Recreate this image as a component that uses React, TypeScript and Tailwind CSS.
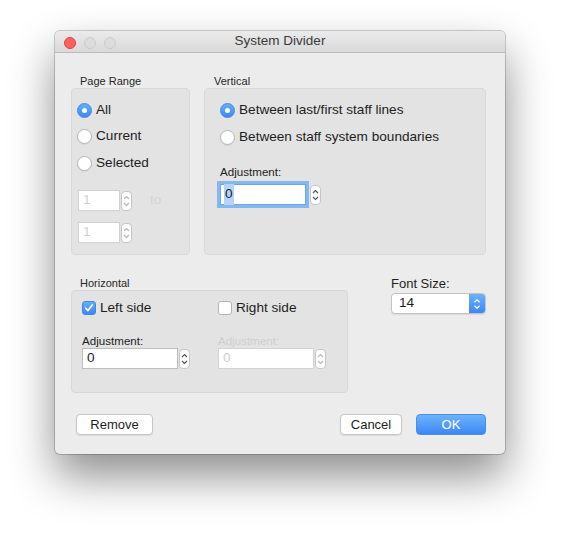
import React from "react";

const font = { fontFamily: '"Liberation Sans", Arial, sans-serif' };

function Radio({ checked, label, extra = "" }: { checked?: boolean; label: string; extra?: string }) {
  return (
    <div className={`flex h-[26px] items-center gap-[4px] ${extra}`}>
      {checked ? (
        <span className="flex h-[15px] w-[15px] items-center justify-center rounded-full border border-[#3d86ef] bg-gradient-to-b from-[#68aef9] to-[#3a88f5]">
          <span className="h-[5px] w-[5px] rounded-full bg-white" />
        </span>
      ) : (
        <span className="h-[15px] w-[15px] rounded-full border border-[#b4b4b4] bg-white shadow-[0_1px_0_rgba(0,0,0,0.05)]" />
      )}
      <span className="text-[13.6px] text-[#1e1e1e]">{label}</span>
    </div>
  );
}

function Check({ checked, label }: { checked?: boolean; label: string }) {
  return (
    <div className="flex h-[20px] items-center gap-[4px]">
      {checked ? (
        <span className="flex h-[14px] w-[14px] items-center justify-center rounded-[3px] border border-[#3d86ef] bg-gradient-to-b from-[#68aef9] to-[#3a88f5]">
          <svg width="10" height="10" viewBox="0 0 10 10">
            <path d="M1.8 5.2 L4 7.6 L8.4 1.8" fill="none" stroke="white" strokeWidth="1.6" strokeLinecap="round" strokeLinejoin="round" />
          </svg>
        </span>
      ) : (
        <span className="h-[14px] w-[14px] rounded-[3px] border border-[#b4b4b4] bg-white" />
      )}
      <span className="text-[13.6px] text-[#1e1e1e]">{label}</span>
    </div>
  );
}

function Stepper({ disabled }: { disabled?: boolean }) {
  const c = disabled ? "#b8b8b8" : "#555";
  return (
    <span className="flex h-[20px] w-[11px] items-center justify-center rounded-[4px] border border-[#c6c6c6] bg-white">
      <svg width="7" height="14" viewBox="0 0 7 14">
        <path d="M1 5 L3.5 2.5 L6 5" fill="none" stroke={c} strokeWidth="1.1" />
        <path d="M1 9 L3.5 11.5 L6 9" fill="none" stroke={c} strokeWidth="1.1" />
      </svg>
    </span>
  );
}

function Spin({ value, width, disabled }: { value: string; width: string; disabled?: boolean }) {
  return (
    <div className="flex items-center gap-[1px]">
      <div className={`flex h-[21px] items-center border px-[4px] text-[13.6px] ${disabled ? "border-[#d3d3d3] bg-white text-[#cfcfcf]" : "border-[#bdbdbd] bg-white text-[#1e1e1e]"} ${width}`}>
        {value}
      </div>
      <Stepper disabled={disabled} />
    </div>
  );
}

function GroupLabel({ text, pl }: { text: string; pl: string }) {
  return <div className={`h-[14px] text-[11px] leading-[14px] text-[#262626] ${pl}`}>{text}</div>;
}

export default function App() {
  return (
    <div className="h-[535px] w-[562px] bg-white pl-[55px] pt-[31px]" style={font}>
      <div className="flex h-[423px] w-[450px] flex-col overflow-hidden rounded-[5px] bg-[#ececec] shadow-[0_0_0_1px_rgba(0,0,0,0.18),0_22px_45px_rgba(0,0,0,0.45)]">
        {/* title bar */}
        <div className="relative flex h-[22px] items-center justify-center border-b border-[#bcbcbc] bg-gradient-to-b from-[#ebebeb] to-[#d9d9d9]">
          <div className="absolute left-[9px] top-[6px] flex gap-[8px]">
            <span className="h-[12px] w-[12px] rounded-full border border-[#e0443e] bg-[#fc605c]" />
            <span className="h-[12px] w-[12px] rounded-full border border-[#cbcbcb] bg-[#dcdcdc]" />
            <span className="h-[12px] w-[12px] rounded-full border border-[#cbcbcb] bg-[#dcdcdc]" />
          </div>
          <span className="text-[13.5px] text-[#3a3a3a]">System Divider</span>
        </div>

        {/* top row */}
        <div className="ml-[16px] mt-[21px] flex gap-[14px]">
          <div className="w-[119px]">
            <GroupLabel text="Page Range" pl="pl-[9px]" />
            <div className="h-[167px] rounded-[4px] border border-[#d8d8d8] bg-[#e3e3e3] pl-[5px] pt-[8px]">
              <Radio checked label="All" />
              <Radio label="Current" />
              <Radio label="Selected" extra="mt-[1px]" />
              <div className="mt-[14px] flex items-center pl-[1px]">
                <Spin value="1" width="w-[42px]" disabled />
                <span className="ml-[18px] text-[13.6px] text-[#d4d4d4]">to</span>
              </div>
              <div className="mt-[11px] pl-[1px]">
                <Spin value="1" width="w-[42px]" disabled />
              </div>
            </div>
          </div>
          <div className="w-[282px]">
            <GroupLabel text="Vertical" pl="pl-[10px]" />
            <div className="h-[167px] rounded-[4px] border border-[#d8d8d8] bg-[#e3e3e3] pl-[15px] pt-[8px]">
              <Radio checked label="Between last/first staff lines" />
              <Radio label="Between staff system boundaries" extra="mt-[1px]" />
              <div className="mt-[15px] h-[14px] text-[11.6px] leading-[14px] text-[#1e1e1e]">Adjustment:</div>
              <div className="mt-[5px] flex items-center gap-[4px]">
                <div className="flex h-[21px] w-[86px] items-center border border-[#6ea5e6] bg-white px-[3px] text-[13.6px] text-[#1e1e1e] shadow-[0_0_0_3px_#86b8ef]">
                  <span className="bg-[#b3d3fb] px-[1px]">0</span>
                </div>
                <Stepper />
              </div>
            </div>
          </div>
        </div>

        {/* middle row */}
        <div className="ml-[16px] mt-[21px] flex items-start gap-[43px]">
          <div className="w-[277px]">
            <GroupLabel text="Horizontal" pl="pl-[9px]" />
            <div className="h-[103px] rounded-[4px] border border-[#d8d8d8] bg-[#e3e3e3] pl-[10px] pt-[7px]">
              <div className="flex">
                <div className="w-[136px]">
                  <Check checked label="Left side" />
                </div>
                <Check label="Right side" />
              </div>
              <div className="mt-[16px] flex">
                <div className="w-[136px]">
                  <div className="h-[14px] text-[11.6px] leading-[14px] text-[#1e1e1e]">Adjustment:</div>
                  <Spin value="0" width="w-[96px]" />
                </div>
                <div>
                  <div className="h-[14px] text-[11.6px] leading-[14px] text-[#cfcfcf]">Adjustment:</div>
                  <Spin value="0" width="w-[96px]" disabled />
                </div>
              </div>
            </div>
          </div>
          <div className="w-[95px]">
            <div className="h-[16px] text-[13px] leading-[16px] text-[#1e1e1e]">Font Size:</div>
            <div className="mt-[1px] flex h-[21px] overflow-hidden rounded-[4px] border border-[#c3c3c3] bg-white shadow-[0_1px_1px_rgba(0,0,0,0.08)]">
              <span className="flex flex-1 items-center pl-[7px] text-[13.6px] text-[#1e1e1e]">14</span>
              <span className="flex w-[16px] items-center justify-center bg-gradient-to-b from-[#6cb2fa] to-[#3b86f5]">
                <svg width="8" height="14" viewBox="0 0 8 14">
                  <path d="M1.5 5.2 L4 2.7 L6.5 5.2" fill="none" stroke="white" strokeWidth="1.3" />
                  <path d="M1.5 8.8 L4 11.3 L6.5 8.8" fill="none" stroke="white" strokeWidth="1.3" />
                </svg>
              </span>
            </div>
          </div>
        </div>

        {/* buttons */}
        <div className="ml-[21px] mr-[19px] mt-[21px] flex items-center">
          <button className="h-[21px] w-[77px] rounded-[4px] border border-[#c5c5c5] bg-white text-[13px] text-[#1e1e1e] shadow-[0_1px_1px_rgba(0,0,0,0.08)]">Remove</button>
          <div className="flex-1" />
          <button className="h-[21px] w-[62px] rounded-[4px] border border-[#c5c5c5] bg-white text-[13px] text-[#1e1e1e] shadow-[0_1px_1px_rgba(0,0,0,0.08)]">Cancel</button>
          <button className="ml-[14px] h-[21px] w-[70px] rounded-[4px] border border-[#4a8cf0] bg-gradient-to-b from-[#6cb3fa] to-[#3d87f6] text-[13px] text-white">OK</button>
        </div>
      </div>
    </div>
  );
}
